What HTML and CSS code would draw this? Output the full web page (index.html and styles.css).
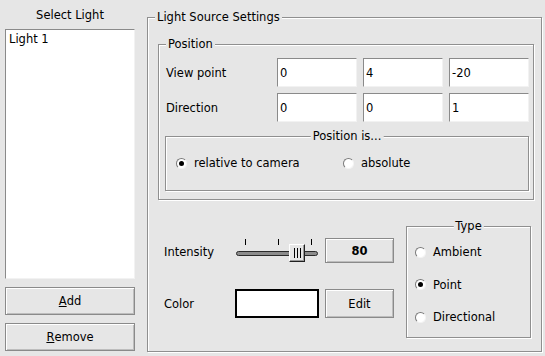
FILE: index.html
```html
<!DOCTYPE html>
<html lang="en">
<head>
  <meta charset="UTF-8">
  <title>Light Source Settings</title>
  <link rel="stylesheet" href="styles.css">
</head>
<body>

  <div class="window">

    <div class="side">
      <div class="side-title">Select Light</div>
      <ul class="light-list">
        <li>Light 1</li>
      </ul>
      <button class="btn side-btn"><u>A</u>dd</button>
      <button class="btn side-btn"><u>R</u>emove</button>
    </div>

    <div class="group settings">
      <span class="group-title">Light Source Settings</span>

      <div class="group position">
        <span class="group-title">Position</span>

        <div class="coord-row first">
          <label>View point</label>
          <input class="field" value="0">
          <input class="field" value="4">
          <input class="field" value="-20">
        </div>
        <div class="coord-row">
          <label>Direction</label>
          <input class="field" value="0">
          <input class="field" value="0">
          <input class="field" value="1">
        </div>

        <div class="group pos-mode">
          <span class="group-title centered">Position is...</span>
          <div class="radio-row">
            <div class="radio-opt wide"><span class="radio checked"></span>relative to camera</div>
            <div class="radio-opt"><span class="radio"></span>absolute</div>
          </div>
        </div>
      </div>

      <div class="lower">
        <div class="props">
          <div class="prop-label">Intensity</div>
          <div class="slider">
            <div class="ticks"><span></span><span></span><span></span></div>
            <div class="track"></div>
            <div class="thumb"><span></span><span></span><span></span></div>
          </div>
          <div class="btn value-box">80</div>

          <div class="prop-label">Color</div>
          <div class="swatch"></div>
          <button class="btn">Edit</button>
        </div>

        <div class="group type">
          <span class="group-title centered">Type</span>
          <div class="radio-col">
            <div class="radio-opt"><span class="radio"></span>Ambient</div>
            <div class="radio-opt"><span class="radio checked"></span>Point</div>
            <div class="radio-opt"><span class="radio"></span>Directional</div>
          </div>
        </div>
      </div>
    </div>

  </div>

</body>
</html>
```

FILE: styles.css
```css
body {
  margin: 0;
  background: #e6e6e6;
  font-family: 'DejaVu Sans', sans-serif;
  font-size: 11.5px;
  color: #000;
}

.window {
  display: flex;
  width: 545px;
  height: 356px;
  overflow: hidden;
}

/* left column */

.side {
  width: 130px;
  margin-left: 5px;
  display: flex;
  flex-direction: column;
  flex-shrink: 0;
}

.side-title {
  height: 29px;
  box-sizing: border-box;
  padding-top: 8px;
  line-height: 14px;
  text-align: center;
}

.light-list {
  list-style: none;
  margin: 0;
  padding: 2px 3px;
  height: 250px;
  box-sizing: border-box;
  background: #fff;
  border: 1px solid;
  border-color: #8a8a8a #f2f2f2 #f2f2f2 #8a8a8a;
  line-height: 14px;
}

.btn {
  box-sizing: border-box;
  border: 1px solid #8a8a8a;
  box-shadow: inset 1px 1px 0 #fff, inset -1px -1px 0 #bdbdbd;
  background: #e6e6e6;
  font: inherit;
  color: #000;
  padding: 0;
  display: flex;
  align-items: center;
  justify-content: center;
}

.side-btn {
  height: 28px;
  margin-top: 8px;
}

/* group boxes */

.group {
  position: relative;
  box-sizing: border-box;
  border: 1px solid #8f8f8f;
  box-shadow: 1px 1px 0 #fff, inset 1px 1px 0 #fff;
  flex-shrink: 0;
}

.group-title {
  position: absolute;
  top: -8px;
  left: 7px;
  padding: 0 2px;
  line-height: 14px;
  background: #e6e6e6;
  white-space: nowrap;
}

.group-title.centered {
  left: 50%;
  transform: translateX(-50%);
}

.settings {
  margin: 17px 0 0 12px;
  width: 395px;
  height: 335px;
}

.position {
  margin: 26px 0 0 10px;
  width: 376px;
  height: 156px;
}

.coord-row {
  display: flex;
  align-items: center;
  height: 29px;
  padding-left: 7px;
  margin-top: 6px;
}

.coord-row.first {
  margin-top: 13px;
}

.coord-row label {
  width: 111px;
  flex-shrink: 0;
}

.field {
  box-sizing: border-box;
  width: 80px;
  height: 29px;
  flex-shrink: 0;
  margin-right: 6px;
  padding: 0 2px;
  border: 1px solid;
  border-color: #8a8a8a #f2f2f2 #f2f2f2 #8a8a8a;
  background: #fff;
  font: inherit;
  color: #000;
}

.field:last-child {
  margin-right: 0;
}

.pos-mode {
  margin: 14px 4px 0 6px;
  height: 55px;
}

.radio-row {
  display: flex;
  padding-left: 10px;
  margin-top: 19px;
}

.radio-opt {
  display: flex;
  align-items: center;
  gap: 7px;
  height: 14px;
  line-height: 14px;
}

.radio-opt.wide {
  width: 167px;
}

.radio {
  width: 11px;
  height: 11px;
  box-sizing: border-box;
  border-radius: 50%;
  border: 1px solid;
  border-color: #7a7a7a #f4f4f4 #f4f4f4 #7a7a7a;
  background: #fff;
  display: flex;
  align-items: center;
  justify-content: center;
}

.radio.checked::after {
  content: "";
  width: 5px;
  height: 5px;
  border-radius: 50%;
  background: #000;
}

/* intensity / color / type */

.lower {
  display: flex;
  margin-top: 26px;
  padding-left: 16px;
}

.props {
  display: grid;
  grid-template-columns: 71px 84px 75px;
  grid-template-rows: 25px 29px;
  row-gap: 26px;
  margin-top: 12px;
  align-self: flex-start;
}

.props .btn {
  margin-left: 6px;
}

.prop-label {
  display: flex;
  align-items: center;
}

.prop-label:first-child {
  padding-top: 3px;
}

.slider {
  position: relative;
}

.ticks {
  display: flex;
  justify-content: space-between;
  height: 6px;
  margin: 1px 7px 0 10px;
}

.ticks span {
  width: 1px;
  background: #000;
}

.track {
  height: 5px;
  box-sizing: border-box;
  margin: 6px 1px 0 1px;
  background: #8c8c8c;
  border: 1px solid #2a2a2a;
  border-radius: 3px;
}

.thumb {
  position: absolute;
  left: 54px;
  top: 6px;
  width: 16px;
  height: 18px;
  box-sizing: border-box;
  background: #e6e6e6;
  border: 1px solid;
  border-color: #fff #202020 #202020 #fff;
  box-shadow: inset -1px -1px 0 #9a9a9a;
  display: flex;
  justify-content: center;
  align-items: center;
  gap: 2px;
}

.thumb span {
  width: 1px;
  height: 10px;
  background: #000;
}

.value-box {
  font-weight: bold;
}

.swatch {
  box-sizing: border-box;
  border: 2px solid #000;
  background: #fff;
}

.type {
  margin-left: 12px;
  width: 125px;
  height: 112px;
}

.radio-col {
  display: flex;
  flex-direction: column;
  gap: 18.5px;
  padding: 18px 0 0 8px;
}
```
